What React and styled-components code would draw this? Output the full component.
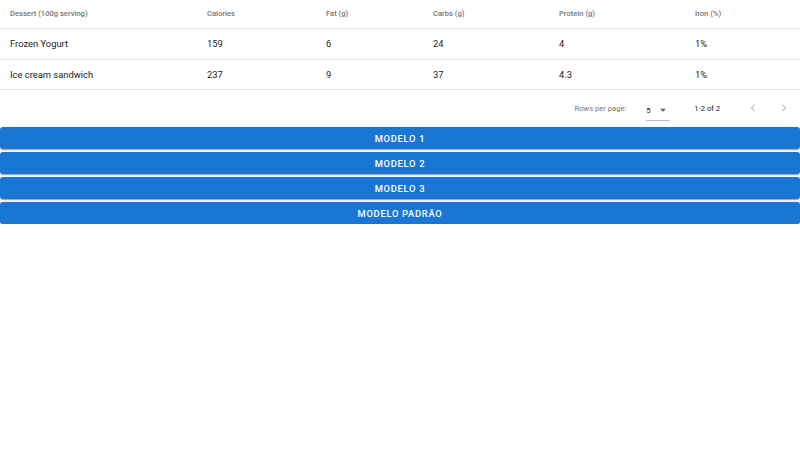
import React from "react";
import styled, { createGlobalStyle } from "styled-components";

const Global = createGlobalStyle`
  html, body { margin: 0; padding: 0; background: #fff; }
  body { font-family: Roboto, "Noto Sans", Arial, sans-serif; }
`;

const Table = styled.div`
  width: 100%;
`;

const Row = styled.div`
  display: grid;
  grid-template-columns: 197px 119px 107px 126px 136px 1fr;
  padding-left: 10px;
  height: ${(p) => (p.$head ? "29px" : "30.5px")};
  align-items: center;
  border-bottom: 1px solid #e0e0e0;
  box-sizing: border-box;
`;

const HeadCell = styled.div`
  font-size: 7.6px;
  font-weight: 500;
  color: #757575;
  white-space: nowrap;
  margin-top: -1px;
`;

const Cell = styled.div`
  font-size: 9.4px;
  color: #212121;
  white-space: nowrap;
`;

const Footer = styled.div`
  height: 36px;
  display: flex;
  align-items: center;
  justify-content: flex-end;
  color: #757575;
  font-size: 7.6px;
  padding-right: 8px;
`;

const Caption = styled.span`
  margin-right: 20px;
`;

const SelectBox = styled.div`
  width: 24px;
  height: 22px;
  display: flex;
  align-items: center;
  border-bottom: 1px solid #bdbdbd;
  box-sizing: border-box;
  color: #212121;
  margin-right: 24px;
  padding-top: 2px;
  margin-top: 3px;
`;

const SelectValue = styled.span`
  flex: 1;
`;

const Range = styled.span`
  color: #212121;
  margin-right: 25px;
`;

const NavButton = styled.button`
  border: 0;
  background: transparent;
  padding: 0;
  width: 16px;
  height: 16px;
  display: flex;
  align-items: center;
  justify-content: center;
  margin-left: ${(p) => p.$gap || 0}px;
  color: #bdbdbd;
`;

const Buttons = styled.div`
  display: flex;
  flex-direction: column;
  gap: 3px;
  padding-top: 1px;
`;

const Button = styled.button`
  width: 100%;
  height: 22px;
  border: 0;
  border-radius: 3px;
  background: #1976d2;
  color: #fff;
  font-family: Roboto, Arial, sans-serif;
  font-weight: 500;
  font-size: 9.4px;
  letter-spacing: 0.7px;
  text-transform: uppercase;
  box-shadow: 0 2px 1px -1px rgba(0,0,0,0.2), 0 1px 1px 0 rgba(0,0,0,0.14), 0 1px 3px 0 rgba(0,0,0,0.12);
  cursor: pointer;
  padding: 0;
`;

const rows = [
  ["Frozen Yogurt", "159", "6", "24", "4", "1%"],
  ["Ice cream sandwich", "237", "9", "37", "4.3", "1%"],
];

const heads = ["Dessert (100g serving)", "Calories", "Fat (g)", "Carbs (g)", "Protein (g)", "Iron (%)"];

export default function App() {
  return (
    <>
      <Global />
      <Table>
        <Row $head>
          {heads.map((h) => (
            <HeadCell key={h}>{h}</HeadCell>
          ))}
        </Row>
        {rows.map((r) => (
          <Row key={r[0]}>
            {r.map((c, i) => (
              <Cell key={i}>{c}</Cell>
            ))}
          </Row>
        ))}
      </Table>
      <Footer>
        <Caption>Rows per page:</Caption>
        <SelectBox>
          <SelectValue>5</SelectValue>
          <svg width="14" height="14" viewBox="0 0 24 24" fill="#616161">
            <path d="M7 10l5 5 5-5z" />
          </svg>
        </SelectBox>
        <Range>1-2 of 2</Range>
        <NavButton $gap={0}>
          <svg width="14" height="14" viewBox="0 0 24 24" fill="currentColor">
            <path d="M15.41 16.09l-4.58-4.59 4.58-4.59L14 5.5l-6 6 6 6z" />
          </svg>
        </NavButton>
        <NavButton $gap={15}>
          <svg width="14" height="14" viewBox="0 0 24 24" fill="currentColor">
            <path d="M8.59 16.34l4.58-4.59-4.58-4.59L10 5.75l6 6-6 6z" />
          </svg>
        </NavButton>
      </Footer>
      <Buttons>
        <Button>Modelo 1</Button>
        <Button>Modelo 2</Button>
        <Button>Modelo 3</Button>
        <Button>Modelo Padrão</Button>
      </Buttons>
    </>
  );
}
